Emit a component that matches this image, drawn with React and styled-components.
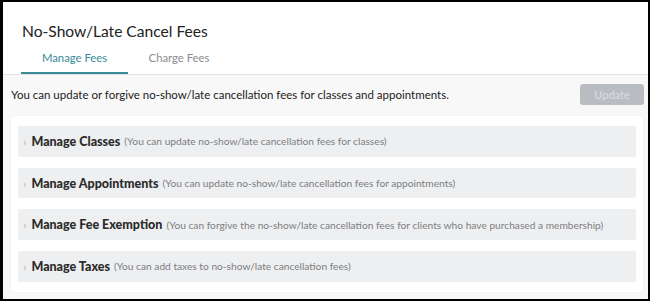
import React from 'react'
import styled, { createGlobalStyle } from 'styled-components'

const GlobalStyle = createGlobalStyle`
  html, body {
    margin: 0;
    padding: 0;
    background: #fff;
  }
  * {
    box-sizing: border-box;
  }
`;

const sections = [
  { title: 'Manage Classes', note: '(You can update no-show/late cancellation fees for classes)' },
  { title: 'Manage Appointments', note: '(You can update no-show/late cancellation fees for appointments)' },
  { title: 'Manage Fee Exemption', note: '(You can forgive the no-show/late cancellation fees for clients who have purchased a membership)' },
  { title: 'Manage Taxes', note: '(You can add taxes to no-show/late cancellation fees)' },
];

function App() {
  return (
    <>
      <GlobalStyle />
      <Frame>
        <Header>
          <Title>No-Show/Late Cancel Fees</Title>
          <Tabs>
            <Tab active width={107}>Manage Fees</Tab>
            <Tab width={102}>Charge Fees</Tab>
          </Tabs>
        </Header>
        <Body>
          <IntroRow>
            <Intro>You can update or forgive no-show/late cancellation fees for classes and appointments.</Intro>
            <UpdateButton disabled>Update</UpdateButton>
          </IntroRow>
          <Card>
            {sections.map((s) => (
              <Section key={s.title}>
                <Chevron>›</Chevron>
                <SectionTitle>{s.title}</SectionTitle>
                <SectionNote>{s.note}</SectionNote>
              </Section>
            ))}
          </Card>
        </Body>
      </Frame>
    </>
  )
}

export default App

const Frame = styled.div`
    width: 650px;
    height: 301px;
    border: 2px solid #000;
    border-left-width: 3px;
    display: flex;
    flex-direction: column;
    font-family: Lato, "Open Sans", sans-serif;
    overflow: hidden;
`;
const Header = styled.div`
    background: #fff;
    border-bottom: 1px solid #e2e3e5;
    padding: 18px 0 0 18px;
`;
const Title = styled.h1`
    margin: 0;
    font-size: 15.6px;
    font-weight: 400;
    color: #222;
    line-height: 22px;
    padding-left: 1px;
`;
const Tabs = styled.div`
    display: flex;
    margin-top: 8px;
`;
const Tab = styled.div`
    width: ${(p) => p.width}px;
    text-align: center;
    font-size: 11.3px;
    line-height: 15px;
    padding-bottom: 7px;
    color: ${(p) => (p.active ? '#3a8a96' : '#8a8c8f')};
    border-bottom: 2px solid ${(p) => (p.active ? '#3a8a96' : 'transparent')};
`;
const Body = styled.div`
    flex: 1;
    background: #f8f8f8;
    padding: 9px 4px 0 8px;
`;
const IntroRow = styled.div`
    display: flex;
    align-items: center;
    justify-content: space-between;
    height: 21px;
`;
const Intro = styled.p`
    margin: 0;
    font-size: 11.5px;
    color: #222;
`;
const UpdateButton = styled.button`
    width: 64px;
    height: 21px;
    border: none;
    border-radius: 3px;
    background: #b9bcc0;
    color: #dcdee1;
    font-family: Lato, sans-serif;
    font-size: 11px;
`;
const Card = styled.div`
    margin-top: 11px;
    background: #fff;
    border-radius: 3px;
    box-shadow: 0 0 1px rgba(0, 0, 0, 0.15);
    padding: 10px 7px 10px 7px;
    display: flex;
    flex-direction: column;
    gap: 11px;
    width: 632px;
`;
const Section = styled.div`
    height: 30.7px;
    background: #eeeff1;
    border-radius: 2px;
    display: flex;
    align-items: center;
    padding-left: 5px;
    white-space: nowrap;
`;
const Chevron = styled.span`
    color: #b5b7ba;
    font-size: 12px;
    margin-right: 5px;
`;
const SectionTitle = styled.span`
    font-size: 12.5px;
    font-weight: 900;
    color: #2b2b2b;
    margin-right: 4px;
`;
const SectionNote = styled.span`
    font-size: 10.2px;
    color: #7c7e81;
`;
